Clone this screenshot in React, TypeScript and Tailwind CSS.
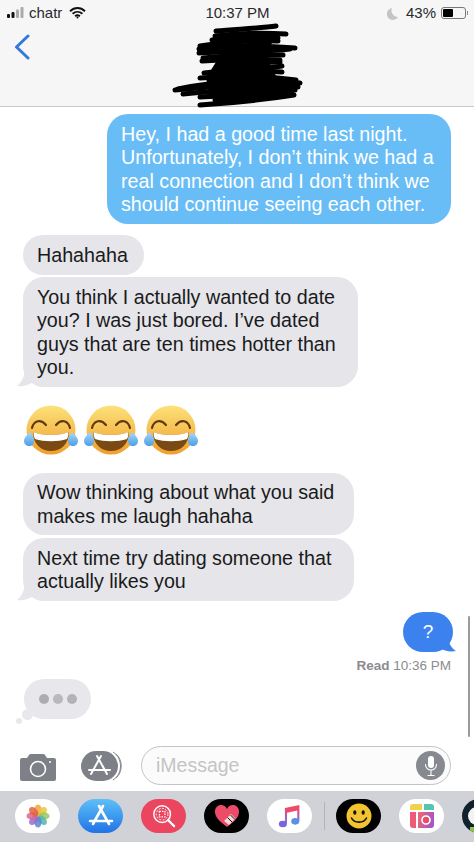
const font = { fontFamily: '"Liberation Sans", Arial, sans-serif' };

const ScribbleLines = [
  'M216 31 C240 29 262 28 276 26',
  'M215 36 C240 33 268 33 286 34',
  'M212 40 C236 36 262 37 278 38',
  'M200 46 C230 41 262 40 278 41',
  'M199 49 C235 45 270 46 295 48',
  'M199 53 C235 51 270 52 290 49',
  'M203 58 C235 55 262 55 283 55',
  'M202 61 C230 59 255 59 280 60',
  'M218 67 C240 62 262 62 280 62',
  'M204 73 C235 70 262 69 282 66',
  'M222 71 C245 70 265 71 282 72',
  'M200 78 C235 76 262 75 296 80',
  'M178 89 C215 81 262 79 300 83',
  'M175 90 C225 85 270 84 298 87',
  'M183 94 C225 90 270 90 295 90',
  'M200 97 C235 95 265 94 292 94',
  'M200 105 C232 103 262 100 294 95',
  'M215 100 C240 98 265 97 285 96',
];

function Scribble() {
  return (
    <svg className="absolute left-0 top-0" width="474" height="108" viewBox="0 0 474 108" fill="none">
      <path d="M222 44 L272 42 L268 60 L276 76 L284 92 L210 96 L206 78 L216 62 Z" fill="#000" />
      {ScribbleLines.map((d) => (
        <path key={d} d={d} stroke="#000" strokeWidth="5" strokeLinecap="round" />
      ))}
    </svg>
  );
}

function StatusBar() {
  return (
    <div className="flex h-[25px] items-center justify-between pl-[7px] pr-[6px] pt-[1px] text-[15px] text-[#2a2a2a]">
      <div className="flex w-[150px] items-center">
        <svg width="20" height="12" viewBox="0 0 20 12">
          <rect x="0" y="7" width="3" height="4" rx="1" fill="#111" />
          <rect x="4.5" y="5" width="3" height="6" rx="1" fill="#111" />
          <rect x="9" y="2.5" width="3" height="8.5" rx="1" fill="#aaa" />
          <rect x="13.5" y="0" width="3" height="11" rx="1" fill="#aaa" />
        </svg>
        <span className="ml-[2px]">chatr</span>
        <svg className="ml-[7px]" width="17" height="12" viewBox="0 0 17 12" fill="none" stroke="#111" strokeWidth="1.9">
          <path d="M1 4.2 C5.5 0 11.5 0 16 4.2" />
          <path d="M3.6 6.8 C6.5 4.2 10.5 4.2 13.4 6.8" />
          <path d="M6.1 9.2 C7.6 8 9.4 8 10.9 9.2" />
          <circle cx="8.5" cy="10.5" r="1" fill="#111" stroke="none" />
        </svg>
      </div>
      <span className="text-[15px]">10:37 PM</span>
      <div className="flex w-[150px] items-center justify-end">
        <svg width="12" height="13" viewBox="0 0 12 13">
          <path d="M5 1 A6 6 0 1 0 11 10 A6.5 6.5 0 0 1 5 1 Z" fill="#c4c4c4" />
        </svg>
        <span className="ml-[7px]">43%</span>
        <div className="ml-[5px] flex h-[12px] w-[25px] items-center rounded-[3px] border border-[#777] p-[1px]">
          <div className="h-full w-[10px] rounded-[1px] bg-black" />
        </div>
        <div className="ml-[1px] h-[4px] w-[1px] bg-[#888]" />
      </div>
    </div>
  );
}

function Header() {
  return (
    <header className="relative h-[107px] border-b border-[#c9c9cb] bg-[#f6f6f7]">
      <StatusBar />
      <div className="pl-[14px] pt-[9px]">
        <svg width="16" height="26" viewBox="0 0 16 26" fill="none" stroke="#3478d8" strokeWidth="3" strokeLinecap="round" strokeLinejoin="round">
          <path d="M14 2 L2.5 13 L14 24" />
        </svg>
      </div>
      <Scribble />
    </header>
  );
}

function GrayBubble({ width, height, tail, children }: { width: number; height: number; tail?: boolean; children: React.ReactNode }) {
  return (
    <div
      className="relative ml-[23px] flex items-center rounded-[21px] bg-[#e5e5ea] pl-[14px] pt-[1px] text-[19.7px] leading-[23.5px] text-[#1a1a1a]"
      style={{ width, height }}
    >
      <div>{children}</div>
      {tail && (
        <svg className="absolute bottom-0 left-[-6px]" width="20" height="20" viewBox="0 0 20 20">
          <path d="M8 0 C8 9 5 15 0 19 C6 20 12 18 16 15 L20 8 Z" fill="#e5e5ea" />
        </svg>
      )}
    </div>
  );
}

function LaughEmoji() {
  return (
    <svg width="54" height="50" viewBox="0 0 54 50">
      <defs>
        <linearGradient id="face" x1="0" y1="0" x2="0" y2="1">
          <stop offset="0" stopColor="#fde17a" />
          <stop offset="1" stopColor="#ef9f2c" />
        </linearGradient>
        <linearGradient id="tear" x1="0" y1="0" x2="0" y2="1">
          <stop offset="0" stopColor="#a8d8fa" />
          <stop offset="1" stopColor="#4b9fe8" />
        </linearGradient>
      </defs>
      <circle cx="27" cy="25" r="24.5" fill="url(#face)" />
      <path d="M9 27 C18 31 36 31 45 27 C45 39 37 46 27 46 C17 46 9 39 9 27 Z" fill="#7a4a12" />
      <path d="M9.5 27 C18 31 36 31 44.5 27 C44.5 30 44 32 43 34 C34 37 20 37 11 34 C10 32 9.5 30 9.5 27 Z" fill="#fff" />
      <path d="M8 23 C10 15 17 14 22 20 M32 20 C37 14 44 15 46 23" fill="none" stroke="#5d3a10" strokeWidth="2.2" strokeLinecap="round" />
      <path d="M6 27 C2 31 0 33 0 36 C0 39 2.5 41 5 41 C8 41 10 39 10 36 C10 33 8 30 6 27 Z" fill="url(#tear)" />
      <path d="M48 27 C52 31 54 33 54 36 C54 39 51.5 41 49 41 C46 41 44 39 44 36 C44 33 46 30 48 27 Z" fill="url(#tear)" />
    </svg>
  );
}

function TypingBubble() {
  return (
    <div className="relative ml-[24px] mt-[6px] flex h-[40px] w-[67px] items-center justify-center gap-[4px] rounded-[20px] bg-[#e8e8ec]">
      <div className="h-[10px] w-[10px] rounded-full bg-[#adadb0]" />
      <div className="h-[10px] w-[10px] rounded-full bg-[#b9b9bc]" />
      <div className="h-[10px] w-[10px] rounded-full bg-[#b3b3b6]" />
      <div className="absolute bottom-[-1px] left-[-2px] h-[11px] w-[11px] rounded-full bg-[#e8e8ec]" />
      <div className="absolute bottom-[-5px] left-[-8px] h-[6px] w-[6px] rounded-full bg-[#e8e8ec]" />
    </div>
  );
}

function Messages() {
  return (
    <main className="relative h-[639px] pt-[7px]">
      <div className="relative ml-[107px] flex h-[110px] w-[344px] items-center rounded-[21px] bg-[#69bdf6] pl-[14px] pt-[1px] text-[19.7px] leading-[23.5px] text-white">
        <div>
          Hey, I had a good time last night.
          <br />
          Unfortunately, I don&rsquo;t think we had a
          <br />
          real connection and I don&rsquo;t think we
          <br />
          should continue seeing each other.
        </div>
      </div>

      <div className="mt-[11px] flex flex-col gap-[2px]">
        <GrayBubble width={121} height={40}>Hahahaha</GrayBubble>
        <GrayBubble width={335} height={110} tail>
          You think I actually wanted to date
          <br />
          you? I was just bored. I&rsquo;ve dated
          <br />
          guys that are ten times hotter than
          <br />
          you.
        </GrayBubble>
      </div>

      <div className="ml-[24px] mt-[18px] flex gap-[6px]">
        <LaughEmoji />
        <LaughEmoji />
        <LaughEmoji />
      </div>

      <div className="mt-[18px] flex flex-col gap-[3px]">
        <GrayBubble width={331} height={62}>
          Wow thinking about what you said
          <br />
          makes me laugh hahaha
        </GrayBubble>
        <GrayBubble width={331} height={63} tail>
          Next time try dating someone that
          <br />
          actually likes you
        </GrayBubble>
      </div>

      <div className="relative ml-[403px] mt-[11px] flex h-[40px] w-[50px] items-center justify-center rounded-[20px] bg-[#3b82ee] text-[19px] text-white">
        ?
        <svg className="absolute bottom-0 right-[-3px]" width="18" height="18" viewBox="0 0 18 18">
          <path d="M9 0 C10 8 13 14 18 17 C12 18 6 17 2 14 Z" fill="#3b82ee" />
        </svg>
      </div>

      <div className="mr-[23px] mt-[6px] text-right text-[13.5px] leading-[15px] text-[#8b8b8f]">
        <span className="font-bold">Read</span> 10:36 PM
      </div>

      <TypingBubble />

      <div className="absolute right-[4px] top-[509px] h-[121px] w-[2px] rounded-full bg-[#9a9a9c]" />
    </main>
  );
}

function Composer() {
  return (
    <div className="flex h-[45px] items-center bg-white pb-[6px] pl-[19px] pr-[23px]">
      <svg width="38" height="28" viewBox="0 0 38 28" className="mt-[3px] shrink-0">
        <path d="M3 5 H8 L10 2 Q10.5 1 12 1 H24 Q25.5 1 26 2 L28 5 H35 Q37 5 37 7 V26 Q37 28 35 28 H3 Q1 28 1 26 V7 Q1 5 3 5 Z" fill="#7d8086" />
        <circle cx="19" cy="16" r="7.5" fill="none" stroke="#fff" strokeWidth="1.6" />
        <circle cx="31" cy="9" r="1" fill="#fff" />
      </svg>
      <svg className="ml-[24px] shrink-0" width="42" height="30" viewBox="0 0 42 30" fill="none">
        <path d="M32 1 C42 7 42 23 32 29" stroke="#85878c" strokeWidth="1" />
        <path d="M35 3 C42 9 42 21 35 27" stroke="#85878c" strokeWidth="1" />
        <rect x="0" y="0" width="37" height="30" rx="15" fill="#7d8086" />
        <path d="M20 5 L10 23 M16 5 L26 23 M8 19 H29" stroke="#fff" strokeWidth="2" strokeLinecap="round" />
      </svg>
      <div className="ml-[18px] flex h-[39px] flex-1 items-center justify-between rounded-[20px] border border-[#c4c4c6] bg-[#fbfbfb] pl-[14px] pr-[5px]">
        <span className="pt-[1px] text-[19.5px] text-[#c4c4c7]">iMessage</span>
        <div className="flex h-[29px] w-[29px] items-center justify-center rounded-full bg-[#868990]">
          <svg width="14" height="22" viewBox="0 0 14 22" fill="none">
            <rect x="4" y="1" width="6" height="12" rx="3" fill="#fff" />
            <path d="M1.5 9 C1.5 17 12.5 17 12.5 9 M7 15.5 V20 M3.5 20.5 H10.5" stroke="#fff" strokeWidth="1.1" />
          </svg>
        </div>
      </div>
    </div>
  );
}

const Petals = [
  ['#f0a63a', 0],
  ['#e8c93f', 45],
  ['#9cc75a', 90],
  ['#55b7a8', 135],
  ['#5b86d6', 180],
  ['#9a6cc8', 225],
  ['#d9668f', 270],
  ['#e2603f', 315],
] as const;

function PhotosIcon() {
  return (
    <svg width="24" height="24" viewBox="0 0 24 24">
      {Petals.map(([color, angle]) => (
        <ellipse key={angle} cx="12" cy="6" rx="3.7" ry="5.6" fill={color} opacity="0.85" transform={`rotate(${angle} 12 12)`} />
      ))}
    </svg>
  );
}

function StoreIcon() {
  return (
    <svg width="26" height="24" viewBox="0 0 26 24" fill="none" stroke="#fff" strokeWidth="2.6" strokeLinecap="round">
      <path d="M15 2 L5 20 M11 2 L21 20 M2 17 H24" />
    </svg>
  );
}

function SearchIcon() {
  return (
    <svg width="24" height="24" viewBox="0 0 26 26" fill="none" stroke="#fff">
      <circle cx="11" cy="11" r="9" strokeWidth="1.6" />
      <circle cx="11" cy="11" r="6.3" strokeWidth="1" strokeDasharray="2 1.6" />
      <path d="M8 8 h6 v6 h-6 z" strokeWidth="1.4" strokeDasharray="1.6 1.2" />
      <path d="M17.5 17.5 L24 24" strokeWidth="2.4" strokeLinecap="round" />
    </svg>
  );
}

function HeartIcon() {
  return (
    <svg width="26" height="24" viewBox="0 0 26 24">
      <path d="M13 23 C5 17 1 13 1 7.5 C1 3.5 4 1 7 1 C9.5 1 12 2.5 13 5 C14 2.5 16.5 1 19 1 C22 1 25 3.5 25 7.5 C25 13 21 17 13 23 Z" fill="#ee4b68" />
      <path d="M10 17 L17 10 L21.5 14.5 L15 21 Z" fill="#f3d9dc" />
      <path d="M13.5 13.5 L18 18 M16.5 11 L21 15.5" stroke="#111" strokeWidth="1" />
    </svg>
  );
}

function MusicIcon() {
  return (
    <svg width="23" height="23" viewBox="0 0 26 26" fill="none">
      <defs>
        <linearGradient id="note" x1="0" y1="0" x2="0" y2="1">
          <stop offset="0" stopColor="#ee4b68" />
          <stop offset="0.55" stopColor="#b25cb8" />
          <stop offset="1" stopColor="#5b7fe8" />
        </linearGradient>
      </defs>
      <path d="M9 21 V4.5 L23 1.5 V18" stroke="url(#note)" strokeWidth="2.4" />
      <path d="M9 4.5 L23 1.5 V6 L9 9 Z" fill="#ee4b68" />
      <ellipse cx="5.5" cy="21.5" rx="4.5" ry="3.7" fill="#7a63dc" />
      <ellipse cx="19.5" cy="18.5" rx="4.5" ry="3.7" fill="#5b8fe8" />
    </svg>
  );
}

function SmileyIcon() {
  return (
    <svg width="26" height="26" viewBox="0 0 26 26" fill="none">
      <circle cx="13" cy="13" r="12.5" fill="#f4c430" />
      <ellipse cx="8.8" cy="9.5" rx="1.6" ry="2.3" fill="#111" />
      <ellipse cx="17.2" cy="9.5" rx="1.6" ry="2.3" fill="#111" />
      <path d="M5.5 15 C8 20.5 18 20.5 20.5 15" stroke="#111" strokeWidth="1.6" strokeLinecap="round" />
    </svg>
  );
}

function CollageIcon() {
  return (
    <svg width="24" height="24" viewBox="0 0 24 24">
      <defs>
        <linearGradient id="collage" x1="0" y1="0" x2="1" y2="0.3">
          <stop offset="0" stopColor="#f0696b" />
          <stop offset="1" stopColor="#a855c8" />
        </linearGradient>
      </defs>
      <path d="M3 0 H12 V6 H0 V3 Q0 0 3 0 Z" fill="#f0d24f" />
      <path d="M14 0 H21 Q24 0 24 3 V6 H14 Z" fill="#55c4b0" />
      <path d="M0 8 H6 V24 H3 Q0 24 0 21 Z" fill="#ee5a78" />
      <path d="M8 8 H24 V21 Q24 24 21 24 H8 Z" fill="url(#collage)" />
      <circle cx="16" cy="16" r="4" fill="#ee4b68" stroke="#fff" strokeWidth="1.6" />
    </svg>
  );
}

function AppPill({ bg, children }: { bg: string; children: React.ReactNode }) {
  return (
    <div className={`flex h-[34px] w-[45px] shrink-0 items-center justify-center rounded-[17px] ${bg}`}>
      {children}
    </div>
  );
}

function AppDrawer() {
  return (
    <div className="flex h-[51px] items-center overflow-hidden bg-[#d0d2d7] pb-[1px] pl-[15px]">
      <div className="flex gap-[18px]">
        <AppPill bg="bg-white"><PhotosIcon /></AppPill>
        <AppPill bg="bg-gradient-to-b from-[#5ec0f7] to-[#2272e6]"><StoreIcon /></AppPill>
        <AppPill bg="bg-[#ec4560]"><SearchIcon /></AppPill>
        <AppPill bg="bg-black"><HeartIcon /></AppPill>
        <AppPill bg="bg-white"><MusicIcon /></AppPill>
      </div>
      <div className="ml-[12px] h-[28px] w-px shrink-0 bg-[#b3b4b8]" />
      <div className="ml-[11px] flex gap-[18px]">
        <AppPill bg="bg-black"><SmileyIcon /></AppPill>
        <AppPill bg="bg-white"><CollageIcon /></AppPill>
        <div className="relative h-[34px] w-[45px] shrink-0 overflow-hidden rounded-[17px] bg-[#10202c]">
          <div className="absolute left-[6px] top-[8px] h-[18px] w-[18px] rounded-full bg-[#f2f2f2]" />
          <div className="absolute bottom-0 left-[8px] h-[6px] w-[14px] bg-[#8cc152]" />
        </div>
      </div>
    </div>
  );
}

export default function App() {
  return (
    <div className="h-[842px] w-[474px] overflow-hidden bg-white" style={font}>
      <Header />
      <Messages />
      <Composer />
      <AppDrawer />
    </div>
  );
}
